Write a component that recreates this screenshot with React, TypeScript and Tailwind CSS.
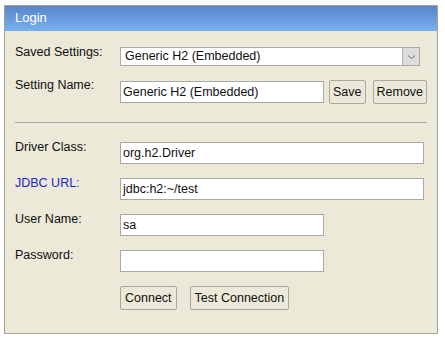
import React from "react";

const font = { fontFamily: '"Liberation Sans", Arial, sans-serif' };

// Simple labelled row: label column + control
function Row({
  label,
  blue,
  className,
  children,
}: {
  label: string;
  blue?: boolean;
  className?: string;
  children: React.ReactNode;
}) {
  return (
    <div className={`flex items-start ${className ?? ""}`}>
      <div
        className={`w-[105px] shrink-0 -mt-[2px] text-[12.5px] leading-[15px] ${
          blue ? "text-[#2424d8]" : "text-[#101010]"
        }`}
      >
        {label}
      </div>
      {children}
    </div>
  );
}

function TextBox({ value, width }: { value: string; width: string }) {
  return (
    <div
      className={`${width} h-[22px] border border-[#a9a9a9] bg-white pl-[2px] text-[12.5px] leading-[20px] text-[#101010]`}
    >
      {value}
    </div>
  );
}

function Btn({ children, className }: { children: React.ReactNode; className?: string }) {
  return (
    <div
      className={`h-[24px] rounded-[2px] border border-[#a8a8a0] bg-[#ece9d8] text-[12.5px] leading-[22px] text-[#101010] ${
        className ?? "px-[4px]"
      }`}
    >
      {children}
    </div>
  );
}

export default function App() {
  return (
    <div className="h-[341px] w-[445px] bg-white pl-[4px] pt-[5px]" style={font}>
      <div className="h-[329px] w-[434px] border border-[#a5a296] bg-[#ece9d8]">
        {/* Title bar */}
        <div className="h-[25px] bg-gradient-to-b from-[#5985ca] to-[#78b0f0] pl-[10px] text-[13px] leading-[24px] text-white">
          Login
        </div>

        <div className="pl-[10px] pt-[16px]">
          <Row label="Saved Settings:">
            <div className="flex h-[19px] w-[300px] items-center border border-[#a9a9a9] bg-white">
              <div className="flex-1 pl-[4px] text-[12.5px] leading-[17px] text-[#101010]">
                Generic H2 (Embedded)
              </div>
              <div className="flex h-[17px] w-[17px] items-center justify-center border-l border-[#b4b4b4] bg-[#dcdcdc]">
                <svg width="9" height="6" viewBox="0 0 9 6">
                  <path d="M1 1.5 L4.5 4.5 L8 1.5" fill="none" stroke="#6b6b6b" strokeWidth="1" />
                </svg>
              </div>
            </div>
          </Row>

          <Row label="Setting Name:" className="mt-[14px]">
            <div className="flex items-start">
              <div className="mt-[1px]">
                <TextBox value="Generic H2 (Embedded)" width="w-[204px]" />
              </div>
              <Btn className="ml-[5px] px-[3px]">Save</Btn>
              <Btn className="ml-[7px] px-[3px]">Remove</Btn>
            </div>
          </Row>

          <div className="mt-[18px] h-px w-[412px] bg-[#a8a8a8]" />

          <Row label="Driver Class:" className="mt-[19px]">
            <TextBox value="org.h2.Driver" width="w-[304px]" />
          </Row>
          <Row label="JDBC URL:" blue className="mt-[14px]">
            <TextBox value="jdbc:h2:~/test" width="w-[304px]" />
          </Row>
          <Row label="User Name:" className="mt-[14px]">
            <TextBox value="sa" width="w-[204px]" />
          </Row>
          <Row label="Password:" className="mt-[14px]">
            <TextBox value="" width="w-[204px]" />
          </Row>

          <div className="mt-[14px] flex pl-[107px]">
            <Btn className="-ml-[2px] px-[4px]">Connect</Btn>
            <Btn className="ml-[13px] px-[4px]">Test Connection</Btn>
          </div>
        </div>
      </div>
    </div>
  );
}
